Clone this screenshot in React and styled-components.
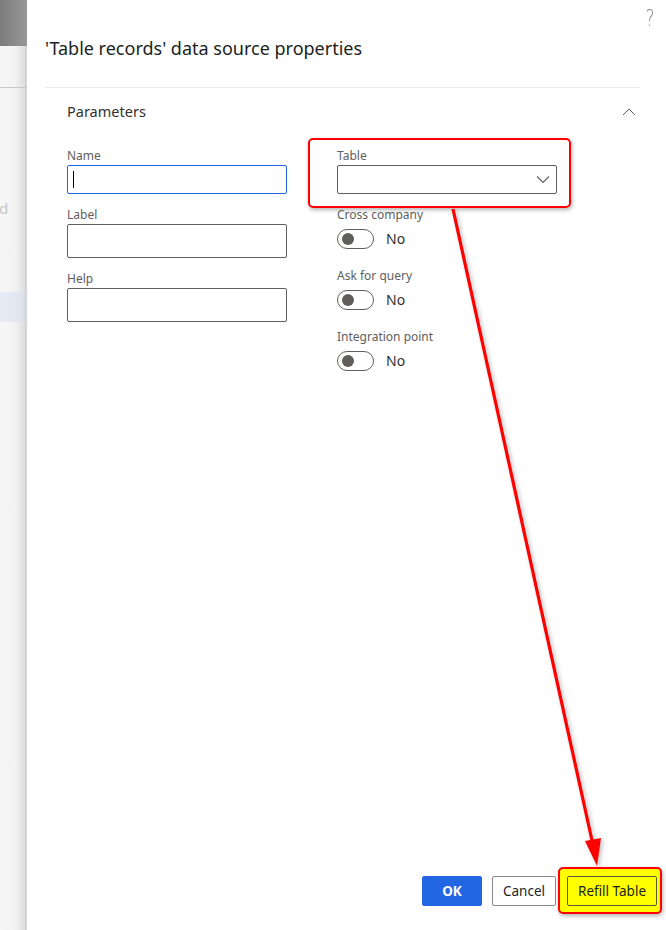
import React from 'react';
import styled, { createGlobalStyle } from 'styled-components';

const Global = createGlobalStyle`
  html, body { margin: 0; padding: 0; background: #fff; }
  body { font-family: "Noto Sans", "Open Sans", sans-serif; color: #323130; }
  * { box-sizing: border-box; }
`;

const Page = styled.div`
  position: relative;
  display: flex;
  width: 666px;
  height: 930px;
  overflow: hidden;
`;

const Backdrop = styled.div`
  width: 27px;
  flex: none;
  display: flex;
  flex-direction: column;
  background: linear-gradient(to right, #f7f7f7 0%, #f3f3f3 55%, #e2e2e2 85%, #cfcfcf 100%);
`;

const BackdropBar = styled.div`
  height: 46px;
  background: linear-gradient(to right, #7c7c7c, #979797);
`;

const BackdropRule = styled.div`
  margin-top: 41px;
  height: 1px;
  background: #c8c8c8;
`;

const BackdropLetter = styled.div`
  margin-top: 109px;
  height: 22px;
  font-size: 15px;
  line-height: 22px;
  color: #c6c6c6;
  margin-left: -1px;
`;

const BackdropSelected = styled.div`
  margin-top: 73px;
  height: 30px;
  background: linear-gradient(to right, #e6ebf6, #dfe4ee 80%, #cfd3da);
`;

const Panel = styled.div`
  flex: 1;
  display: flex;
  flex-direction: column;
  padding: 0 26px 0 18px;
`;

const TopRow = styled.div`
  height: 34px;
  display: flex;
  justify-content: flex-end;
  align-items: flex-start;
  padding-top: 5px;
  margin-right: -16px;
`;

const HelpMark = styled.span`
  font-family: "DejaVu Sans", sans-serif;
  font-weight: 200;
  font-size: 23px;
  line-height: 26px;
  color: #8a8886;
  transform: scaleX(0.75);
`;

const Title = styled.h1`
  margin: 2px 0 0;
  font-size: 18px;
  font-weight: 400;
  line-height: 24px;
  color: #201f1e;
`;

const Section = styled.section`
  margin-top: 27px;
  border-top: 1px solid #edebe9;
  padding: 0 0 0 22px;
  flex: 1;
  display: flex;
  flex-direction: column;
`;

const SectionHead = styled.div`
  height: 46px;
  display: flex;
  align-items: center;
  justify-content: space-between;
  padding-right: 4px;
`;

const SectionTitle = styled.span`
  font-size: 14.5px;
  color: #323130;
`;

const Form = styled.div`
  margin-top: 14px;
  display: grid;
  grid-template-columns: 220px 220px;
  column-gap: 50px;
  align-items: start;
`;

const Column = styled.div`
  display: flex;
  flex-direction: column;
`;

const Field = styled.div`
  position: relative;
  display: flex;
  flex-direction: column;
  margin-bottom: ${p => p.$gap || 13}px;
`;

const Label = styled.label`
  font-size: 12px;
  line-height: 16px;
  color: #605e5c;
  margin-bottom: 1px;
`;

const Input = styled.div`
  height: ${p => p.$h || 34}px;
  border: 1px solid ${p => (p.$focus ? '#2266e3' : '#605e5c')};
  border-radius: 2px;
  display: flex;
  align-items: center;
  padding-left: 5px;
  background: #fff;
`;

const Caret = styled.span`
  width: 1px;
  height: 17px;
  background: #000;
`;

const Select = styled(Input)`
  justify-content: flex-end;
  padding-right: 6px;
`;

const Highlight = styled.div`
  position: absolute;
  left: ${p => p.$l}px;
  right: ${p => p.$r}px;
  top: ${p => p.$t}px;
  bottom: ${p => p.$b}px;
  border: 2px solid #ff0000;
  border-radius: 5px;
  box-shadow: 1px 2px 4px rgba(0, 0, 0, 0.3);
  background: ${p => p.$fill || 'transparent'};
  z-index: 0;
`;

const ToggleRow = styled.div`
  display: flex;
  align-items: center;
  gap: 12px;
  margin-top: 5px;
`;

const Track = styled.div`
  width: 37px;
  height: 20px;
  flex: none;
  border: 1px solid #605e5c;
  border-radius: 10px;
  display: flex;
  align-items: center;
  padding-left: 4px;
`;

const Knob = styled.div`
  width: 12px;
  height: 12px;
  border-radius: 50%;
  background: #605e5c;
`;

const ToggleText = styled.span`
  font-size: 14px;
  line-height: 20px;
  color: #323130;
`;

const Footer = styled.div`
  margin-top: auto;
  margin-right: -17px;
  margin-bottom: 24px;
  display: flex;
  justify-content: flex-end;
  align-items: center;
  gap: 10px;
`;

const Button = styled.button`
  position: relative;
  z-index: 1;
  height: 30px;
  padding: 0 ${p => p.$pad || 10}px;
  min-width: ${p => p.$min || 0}px;
  font-family: "Noto Sans", sans-serif;
  font-size: 13.5px;
  font-weight: ${p => (p.$primary ? 700 : 400)};
  color: ${p => (p.$primary ? '#fff' : '#201f1e')};
  background: ${p => (p.$primary ? '#2266e3' : p.$yellow ? '#ffff00' : '#fff')};
  border: 1px solid ${p => (p.$primary ? '#2266e3' : p.$yellow ? '#5a5a3a' : '#8a8886')};
  border-radius: 2px;
`;

const Marked = styled.div`
  position: relative;
  margin-left: 1px;
`;

const Arrow = styled.svg`
  position: absolute;
  left: 0;
  top: 0;
  pointer-events: none;
  filter: drop-shadow(2px 2px 2px rgba(0, 0, 0, 0.25));
`;

const ChevronUp = () => (
  <svg width="14" height="9" viewBox="0 0 14 9">
    <path d="M1 8 L7 2 L13 8" fill="none" stroke="#605e5c" strokeWidth="1" />
  </svg>
);

const ChevronDown = () => (
  <svg width="14" height="9" viewBox="0 0 14 9">
    <path d="M1 1.5 L7 7.5 L13 1.5" fill="none" stroke="#605e5c" strokeWidth="1.1" />
  </svg>
);

const Toggle = ({ label }) => (
  <Field $gap={19}>
    <Label>{label}</Label>
    <ToggleRow>
      <Track>
        <Knob />
      </Track>
      <ToggleText>No</ToggleText>
    </ToggleRow>
  </Field>
);

export default function App() {
  return (
    <Page>
      <Global />
      <Backdrop>
        <BackdropBar />
        <BackdropRule />
        <BackdropLetter>d</BackdropLetter>
        <BackdropSelected />
      </Backdrop>
      <Panel>
        <TopRow>
          <HelpMark>?</HelpMark>
        </TopRow>
        <Title>'Table records' data source properties</Title>
        <Section>
          <SectionHead>
            <SectionTitle>Parameters</SectionTitle>
            <ChevronUp />
          </SectionHead>
          <Form>
            <Column>
              <Field>
                <Label>Name</Label>
                <Input $h={29} $focus>
                  <Caret />
                </Input>
              </Field>
              <Field>
                <Label>Label</Label>
                <Input />
              </Field>
              <Field>
                <Label>Help</Label>
                <Input />
              </Field>
            </Column>
            <Column>
              <Field>
                <Highlight $l={-29} $r={-14} $t={-10} $b={-14} />
                <Label>Table</Label>
                <Select $h={29}>
                  <ChevronDown />
                </Select>
              </Field>
              <Toggle label="Cross company" />
              <Toggle label="Ask for query" />
              <Toggle label="Integration point" />
            </Column>
          </Form>
          <Footer>
            <Button $primary $min={60}>OK</Button>
            <Button $min={63}>Cancel</Button>
            <Marked>
              <Highlight $l={-9} $r={-5} $t={-9} $b={-8} $fill="#ffff00" />
              <Button $yellow $pad={10}>Refill Table</Button>
            </Marked>
          </Footer>
        </Section>
      </Panel>
      <Arrow width="666" height="930" viewBox="0 0 666 930">
        <line x1="453" y1="209" x2="593" y2="845" stroke="#ff0000" strokeWidth="3.2" />
        <polygon points="597,866 585,841 601,838" fill="#ff0000" />
      </Arrow>
    </Page>
  );
}
